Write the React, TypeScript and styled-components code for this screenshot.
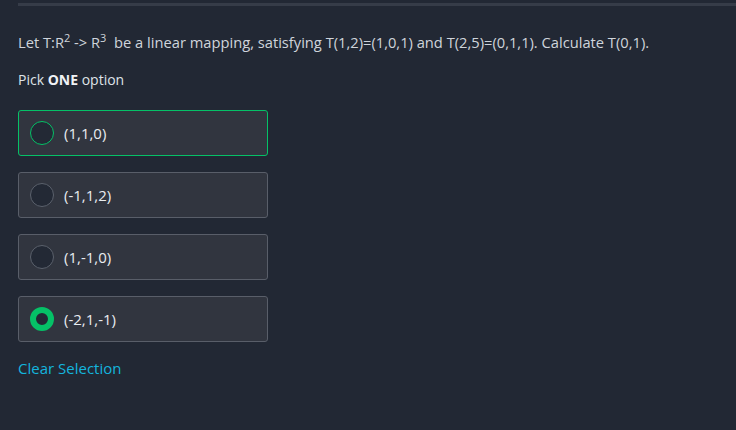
import React, { useState } from 'react'
import styled, { createGlobalStyle } from 'styled-components'

const GlobalStyle = createGlobalStyle`
  html, body {
    margin: 0;
    padding: 0;
    background: #222834;
  }
  body {
    font-family: "Open Sans", "Noto Sans", sans-serif;
  }
`

const options = ['(1,1,0)', '(-1,1,2)', '(1,-1,0)', '(-2,1,-1)']

const App = () => {
  const [selected, setSelected] = useState<number | null>(3)

  return (
    <Page>
      <GlobalStyle />
      <TopRule />
      <Question>
        Let T:R<sup>2</sup> -&gt; R<sup>3</sup>&nbsp; be a linear mapping, satisfying T(1,2)=(1,0,1) and
        T(2,5)=(0,1,1). Calculate T(0,1).
      </Question>
      <Hint>
        Pick <b>ONE</b> option
      </Hint>
      <Options>
        {options.map((opt, i) => (
          <Option key={opt} hovered={i === 0} onClick={() => setSelected(i)}>
            <Radio checked={selected === i} hovered={i === 0} />
            <Label>{opt}</Label>
          </Option>
        ))}
      </Options>
      <Clear onClick={() => setSelected(null)}>Clear Selection</Clear>
    </Page>
  )
}

export default App

const Page = styled.div`
  width: 736px;
  height: 430px;
  background: #222834;
  overflow: hidden;
  padding: 3px 0 0 18px;
  box-sizing: border-box;
`

const TopRule = styled.div`
  height: 3px;
  background: #363c48;
`

const Question = styled.div`
  margin-top: 24px;
  color: #cfd4db;
  font-size: 14.7px;
  line-height: 24px;

  sup {
    font-size: 11px;
    line-height: 0;
    vertical-align: 6px;
  }
`

const Hint = styled.div`
  margin-top: 14px;
  color: #dfe3e8;
  font-size: 14px;
  line-height: 24px;

  b {
    font-weight: 700;
    color: #f0f2f5;
  }
`

const Options = styled.div`
  margin-top: 18px;
  display: flex;
  flex-direction: column;
  gap: 16px;
`

const Option = styled.div<{ hovered?: boolean }>`
  width: 250px;
  height: 46px;
  box-sizing: border-box;
  display: flex;
  align-items: center;
  padding-left: 11px;
  background: #31353f;
  border: 1px solid ${p => (p.hovered ? '#05c167' : '#595e69')};
  border-radius: 3px;
  cursor: pointer;
`

const Radio = styled.span<{ checked?: boolean; hovered?: boolean }>`
  width: 24px;
  height: 24px;
  box-sizing: border-box;
  border-radius: 50%;
  background: #232935;
  border: ${p =>
    p.checked ? '6px solid #05c167' : p.hovered ? '1px solid #05c167' : '1px solid #5b616c'};
`

const Label = styled.span`
  margin-left: 10px;
  color: #e9ecf0;
  font-size: 15px;
`

const Clear = styled.div`
  margin-top: 16px;
  color: #14b4dd;
  font-size: 15px;
  cursor: pointer;
`
